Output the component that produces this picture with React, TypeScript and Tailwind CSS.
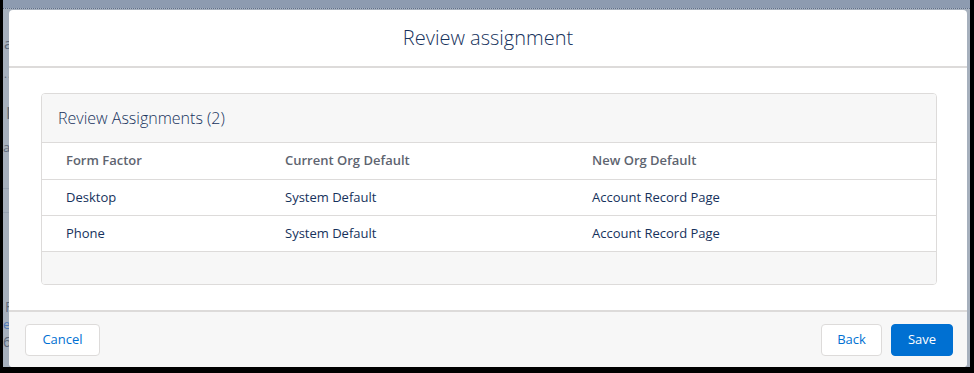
import React from 'react';

const rows = [
  { factor: 'Desktop', current: 'System Default', next: 'Account Record Page' },
  { factor: 'Phone', current: 'System Default', next: 'Account Record Page' },
];

function Backdrop() {
  // dimmed page peeking out behind the modal
  return (
    <div className="absolute inset-0 overflow-hidden text-[#5d6879] text-[13px]">
      <div className="h-[8px] bg-[#8d9bb0]" />
      <div className="h-[1px] border-t border-dotted border-[#5f6f8a]" />
      <span className="absolute left-[1px] top-[32px] text-[15px]">a</span>
      <span className="absolute left-[1px] top-[66px] text-[11px] tracking-widest">...</span>
      <span className="absolute left-[3px] top-[100px] text-[17px] font-semibold">P</span>
      <span className="absolute left-[0px] top-[138px] text-[13px]">ac</span>
      <div className="absolute left-0 top-[188px] w-[8px] border-t border-[#97a2b1]" />
      <div className="absolute left-0 top-[212px] w-[8px] border-t border-[#97a2b1]" />
      <span className="absolute left-[2px] top-[296px] text-[14px]">F</span>
      <span className="absolute left-[0px] top-[315px] text-[13px] text-[#4f79b8]">e</span>
      <span className="absolute left-[0px] top-[331px] text-[14px]">6</span>
    </div>
  );
}

export default function App() {
  return (
    <div
      className="w-[974px] h-[373px] bg-black pl-[3px] pr-[4px] pb-[6px] flex"
      style={{ fontFamily: '"Open Sans", Arial, sans-serif' }}
    >
      <div className="relative flex-1 bg-[#a6b0bd] pt-[10px] pl-[6px] pr-[3px] flex flex-col">
        <Backdrop />

        {/* MODAL */}
        <div className="relative z-10 flex-1 bg-white rounded-[4px] flex flex-col overflow-hidden">
          <div className="h-[58px] shrink-0 flex items-center justify-center border-b-2 border-[#dddbda]">
            <h2 className="text-[20px] font-light text-[#16325c] leading-none">Review assignment</h2>
          </div>

          <div className="flex-1 pt-[25px] pl-[32px] pr-[30px]">
            <div className="border border-[#dddbda] rounded-[4px] overflow-hidden">
              <div className="h-[49px] bg-[#f7f7f7] border-b border-[#dddbda] flex items-center px-[16px]">
                <span className="text-[16px] font-light text-[#16325c]">Review Assignments (2)</span>
              </div>
              <div className="h-[37px] border-b border-[#dddbda] grid grid-cols-[219px_307px_1fr] items-center pl-[24px] text-[13px] font-semibold text-[#5e6470]">
                <span>Form Factor</span>
                <span>Current Org Default</span>
                <span>New Org Default</span>
              </div>
              {rows.map((r) => (
                <div
                  key={r.factor}
                  className="h-[36px] border-b border-[#dddbda] grid grid-cols-[219px_307px_1fr] items-center pl-[24px] text-[13px] text-[#16325c]"
                >
                  <span>{r.factor}</span>
                  <span>{r.current}</span>
                  <span>{r.next}</span>
                </div>
              ))}
              <div className="h-[32px] bg-[#f7f7f7]" />
            </div>
          </div>

          <div className="h-[57px] shrink-0 bg-[#f7f7f7] border-t-2 border-[#dddbda] flex items-center justify-between pl-[16px] pr-[14px]">
            <button className="h-[32px] px-[16px] w-[75px] bg-white border border-[#dddbda] rounded-[4px] text-[13px] text-[#0070d2]">
              Cancel
            </button>
            <div className="flex gap-[9px]">
              <button className="h-[32px] w-[61px] bg-white border border-[#dddbda] rounded-[4px] text-[13px] text-[#0070d2]">
                Back
              </button>
              <button className="h-[32px] w-[62px] bg-[#0070d2] border border-[#0070d2] rounded-[4px] text-[13px] text-white">
                Save
              </button>
            </div>
          </div>
        </div>
      </div>
    </div>
  );
}
